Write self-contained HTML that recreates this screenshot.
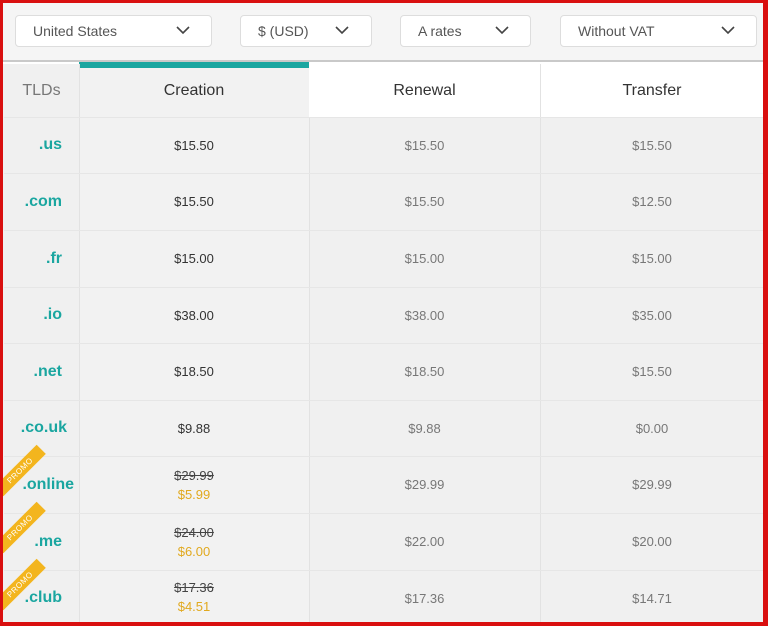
<!DOCTYPE html>
<html><head><style>
*{margin:0;padding:0;box-sizing:border-box}
body{width:768px;height:626px;overflow:hidden;background:#fff;font-family:"Liberation Sans",sans-serif;position:relative}
.frame{position:absolute;left:0;top:0;width:768px;height:626px;border:3px solid #d90f0f;border-right-width:5px;border-bottom-width:4px;z-index:10;pointer-events:none}
.top{position:absolute;left:0;top:0;width:768px;height:62px;background:#f5f5f5;border-bottom:2px solid #c9c9c9}
.dd{position:absolute;top:15px;height:32px;background:#fff;border:1px solid #ddd;border-radius:4px;font-size:14px;color:#555;line-height:30px;padding-left:17px}
.dd svg{position:absolute;top:10px}
.c{position:absolute;display:flex;align-items:center;justify-content:center;font-size:13px;color:#777}
.hd{font-size:16px;color:#333}
.tld{justify-content:flex-end;padding-right:17px;color:#1aa6a0;font-weight:bold;font-size:16px}
.cr{color:#333}
.old{text-decoration:line-through;color:#444}
.promo{color:#e1a91f}
.ribbon{position:absolute;left:-10px;width:60px;height:13px;background:#f3b51e;transform:rotate(-45deg);font-size:8px;color:#fff;text-align:center;line-height:13px;letter-spacing:.5px}
.vl{position:absolute;width:1px;background:#e2e2e2}
.hl{position:absolute;left:4px;width:760px;height:1px;background:#e6e6e6}
</style></head><body>
<div class="top"></div>
<div class="dd" style="left:15px;width:197px">United States<svg style="left:160px" width="14" height="9" viewBox="0 0 14 9"><path d="M1 1l6 6 6-6" fill="none" stroke="#444" stroke-width="1.6"/></svg></div>
<div class="dd" style="left:240px;width:132px">$ (USD)<svg style="left:94px" width="14" height="9" viewBox="0 0 14 9"><path d="M1 1l6 6 6-6" fill="none" stroke="#444" stroke-width="1.6"/></svg></div>
<div class="dd" style="left:400px;width:131px">A rates<svg style="left:94px" width="14" height="9" viewBox="0 0 14 9"><path d="M1 1l6 6 6-6" fill="none" stroke="#444" stroke-width="1.6"/></svg></div>
<div class="dd" style="left:560px;width:197px">Without VAT<svg style="left:160px" width="14" height="9" viewBox="0 0 14 9"><path d="M1 1l6 6 6-6" fill="none" stroke="#444" stroke-width="1.6"/></svg></div>

<div style="position:absolute;left:0;top:64px;width:79px;height:562px;background:#f0f0f0"></div>
<div style="position:absolute;left:79px;top:64px;width:230px;height:562px;background:#f2f2f2"></div>
<div style="position:absolute;left:309px;top:117px;width:459px;height:509px;background:#f0f0f0"></div>
<div style="position:absolute;left:79px;top:62px;width:230px;height:6px;background:#1aa6a0"></div>
<div class="vl" style="left:79px;top:64px;height:562px"></div>
<div class="vl" style="left:309px;top:117px;height:509px"></div>
<div class="vl" style="left:540px;top:64px;height:562px"></div>

<div class="c" style="left:4px;top:64px;width:75px;height:53px;font-size:16px;color:#777">TLDs</div>
<div class="c hd" style="left:79px;top:64px;width:230px;height:53px">Creation</div>
<div class="c hd" style="left:309px;top:64px;width:231px;height:53px">Renewal</div>
<div class="c hd" style="left:540px;top:64px;width:224px;height:53px">Transfer</div>

<div class="hl" style="top:117px"></div><div class="hl" style="top:173px"></div><div class="hl" style="top:230px"></div><div class="hl" style="top:287px"></div><div class="hl" style="top:343px"></div><div class="hl" style="top:400px"></div><div class="hl" style="top:456px"></div><div class="hl" style="top:513px"></div><div class="hl" style="top:570px"></div>

<!-- rows -->
<div class="c tld" style="left:0;top:117px;width:79px;height:56px">.us</div>
<div class="c cr" style="left:79px;top:117px;width:230px;height:56px">$15.50</div>
<div class="c" style="left:309px;top:117px;width:231px;height:56px">$15.50</div>
<div class="c" style="left:540px;top:117px;width:224px;height:56px">$15.50</div>

<div class="c tld" style="left:0;top:173px;width:79px;height:57px">.com</div>
<div class="c cr" style="left:79px;top:173px;width:230px;height:57px">$15.50</div>
<div class="c" style="left:309px;top:173px;width:231px;height:57px">$15.50</div>
<div class="c" style="left:540px;top:173px;width:224px;height:57px">$12.50</div>

<div class="c tld" style="left:0;top:230px;width:79px;height:57px">.fr</div>
<div class="c cr" style="left:79px;top:230px;width:230px;height:57px">$15.00</div>
<div class="c" style="left:309px;top:230px;width:231px;height:57px">$15.00</div>
<div class="c" style="left:540px;top:230px;width:224px;height:57px">$15.00</div>

<div class="c tld" style="left:0;top:287px;width:79px;height:56px">.io</div>
<div class="c cr" style="left:79px;top:287px;width:230px;height:56px">$38.00</div>
<div class="c" style="left:309px;top:287px;width:231px;height:56px">$38.00</div>
<div class="c" style="left:540px;top:287px;width:224px;height:56px">$35.00</div>

<div class="c tld" style="left:0;top:343px;width:79px;height:57px">.net</div>
<div class="c cr" style="left:79px;top:343px;width:230px;height:57px">$18.50</div>
<div class="c" style="left:309px;top:343px;width:231px;height:57px">$18.50</div>
<div class="c" style="left:540px;top:343px;width:224px;height:57px">$15.50</div>

<div class="c tld" style="left:0;top:400px;width:79px;height:56px;padding-right:12px">.co.uk</div>
<div class="c cr" style="left:79px;top:400px;width:230px;height:56px">$9.88</div>
<div class="c" style="left:309px;top:400px;width:231px;height:56px">$9.88</div>
<div class="c" style="left:540px;top:400px;width:224px;height:56px">$0.00</div>

<div class="c tld" style="left:0;top:456px;width:79px;height:57px;padding-right:5px">.online</div>
<div class="c cr" style="left:79px;top:456px;width:230px;height:57px;flex-direction:column;line-height:19px"><span class="old">$29.99</span><span class="promo">$5.99</span></div>
<div class="c" style="left:309px;top:456px;width:231px;height:57px">$29.99</div>
<div class="c" style="left:540px;top:456px;width:224px;height:57px">$29.99</div>
<div class="ribbon" style="top:464px">PROMO</div>

<div class="c tld" style="left:0;top:513px;width:79px;height:57px">.me</div>
<div class="c cr" style="left:79px;top:513px;width:230px;height:57px;flex-direction:column;line-height:19px"><span class="old">$24.00</span><span class="promo">$6.00</span></div>
<div class="c" style="left:309px;top:513px;width:231px;height:57px">$22.00</div>
<div class="c" style="left:540px;top:513px;width:224px;height:57px">$20.00</div>
<div class="ribbon" style="top:521px">PROMO</div>

<div class="c tld" style="left:0;top:570px;width:79px;height:56px">.club</div>
<div class="c cr" style="left:79px;top:570px;width:230px;height:54px;flex-direction:column;line-height:19px"><span class="old">$17.36</span><span class="promo">$4.51</span></div>
<div class="c" style="left:309px;top:570px;width:231px;height:56px">$17.36</div>
<div class="c" style="left:540px;top:570px;width:224px;height:56px">$14.71</div>
<div class="ribbon" style="top:578px">PROMO</div>

<div class="frame"></div>
</body></html>
